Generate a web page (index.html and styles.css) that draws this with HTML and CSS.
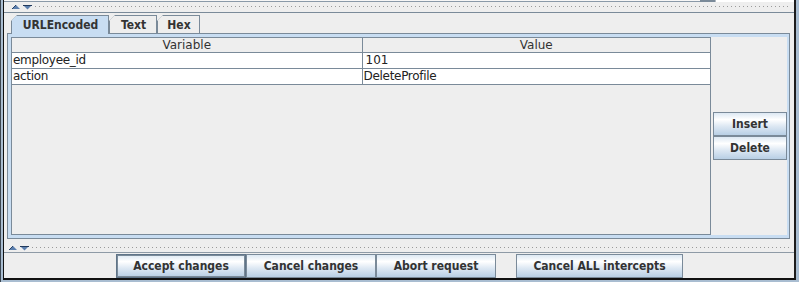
FILE: index.html
```html
<!DOCTYPE html>
<html>
<head>
<meta charset="utf-8">
<link rel="stylesheet" href="styles.css">
</head>
<body>
<div class="window">
  <div class="pane">
    <div class="top-strip">
      <div class="ts-track"></div>
      <div class="ts-thumb"></div>
      <div class="ts-corner"></div>
    </div>
    <div class="divider divider-top">
      <svg class="arrows" width="21" height="5" viewBox="0 0 21 5">
        <polygon points="4,0 8,4 0,4" fill="#5b7fae"/>
        <polyline points="0,4 4,0" stroke="#2a4468" stroke-width="1" fill="none"/>
        <polygon points="11,0 20,0 15.5,4.5" fill="#5b7fae"/>
        <line x1="11" y1="0.5" x2="20" y2="0.5" stroke="#223a5c" stroke-width="1"/>
      </svg>
      <div class="dots"></div>
    </div>
    <div class="tab-section">
      <div class="tabbar">
        <div class="tab tab-url selected"><span class="tab-face">URLEncoded</span></div>
        <div class="tab tab-text"><span class="tab-face">Text</span></div>
        <div class="tab tab-hex"><span class="tab-face">Hex</span></div>
      </div>
      <div class="tab-box">
        <div class="tab-content">
          <div class="scroll">
            <table class="grid">
              <colgroup><col class="col-a"><col class="col-b"></colgroup>
              <thead>
                <tr><th>Variable</th><th>Value</th></tr>
              </thead>
              <tbody>
                <tr><td>employee_id</td><td class="editing">101</td></tr>
                <tr><td>action</td><td>DeleteProfile</td></tr>
              </tbody>
            </table>
          </div>
          <div class="side">
            <button class="btn side-btn">Insert</button>
            <button class="btn side-btn">Delete</button>
          </div>
        </div>
      </div>
    </div>
    <div class="divider divider-bottom">
      <svg class="arrows" width="21" height="5" viewBox="0 0 21 5">
        <polygon points="4,0 8,4 0,4" fill="#5b7fae"/>
        <polyline points="0,4 4,0" stroke="#2a4468" stroke-width="1" fill="none"/>
        <polygon points="11,0 20,0 15.5,4.5" fill="#5b7fae"/>
        <line x1="11" y1="0.5" x2="20" y2="0.5" stroke="#223a5c" stroke-width="1"/>
      </svg>
      <div class="dots"></div>
    </div>
    <div class="button-bar">
      <button class="btn default w-accept">Accept changes</button>
      <button class="btn w-cancel">Cancel changes</button>
      <button class="btn w-abort">Abort request</button>
      <button class="btn w-all">Cancel ALL intercepts</button>
    </div>
  </div>
</div>
</body>
</html>
```
FILE: styles.css
```css
html, body {
  margin: 0;
  padding: 0;
}

body {
  width: 799px;
  height: 282px;
  overflow: hidden;
  background: #a9bdd1;
  font-family: "DejaVu Sans", sans-serif;
  font-size: 12px;
  color: #333333;
}

.window {
  width: 799px;
  height: 282px;
  box-sizing: border-box;
  padding-left: 3px;
  background: #a9bdd1;
  box-shadow: inset 1px 0 0 #3c4650;
}

.pane {
  width: 793px;
  height: 280px;
  box-sizing: border-box;
  border-left: 1px solid #111111;
  border-right: 2px solid #1c1c1c;
  border-bottom: 2px solid #111111;
  background: #eeeeee;
  display: flex;
  flex-direction: column;
}

/* remnant of the component above */
.top-strip {
  display: flex;
  height: 2px;
  flex: none;
}
.ts-track {
  flex: 1;
  background: #f6f6f6;
  border-bottom: 1px solid #8a99a8;
}
.ts-thumb {
  width: 15px;
  background: #7a8a99;
}
.ts-corner {
  width: 79px;
  background: #ffffff;
  box-shadow: inset 1px 0 0 #b0b8c0;
}

/* split pane dividers */
.divider {
  height: 10px;
  flex: none;
  box-sizing: border-box;
  display: flex;
  align-items: flex-start;
}
.divider-top {
  padding: 3px 4px 0 8px;
}
.divider-bottom {
  padding: 4px 4px 0 5px;
}
.arrows {
  display: block;
  flex: none;
}
.dots {
  flex: 1;
  height: 1px;
  margin-top: 1px;
  margin-left: 2px;
  background: repeating-linear-gradient(to right, #9a9a9a 0 1px, transparent 1px 4px);
}

/* tabbed pane */
.tab-section {
  flex: none;
  height: 230px;
  box-sizing: border-box;
  border-top: 1px solid #7a8a99;
  padding: 2px 4px 3px 3px;
  display: flex;
  flex-direction: column;
}

.tabbar {
  display: flex;
  align-items: flex-start;
  height: 18px;
  padding-left: 4px;
  flex: none;
  position: relative;
  z-index: 1;
}

.tab {
  height: 18px;
  box-sizing: border-box;
  padding: 1px 1px 0 1px;
  background: #7a8a99;
  clip-path: polygon(0 6px, 6px 0, 100% 0, 100% 100%, 0 100%);
  flex: none;
}
.tab-face {
  display: flex;
  align-items: center;
  justify-content: center;
  height: 100%;
  padding-left: 1px;
  background: #eeeeee;
  clip-path: polygon(0 2.6px, 2.6px 0, 100% 0, 100% 100%, 0 100%);
  font-family: "DejaVu Sans Condensed", "DejaVu Sans", sans-serif;
  font-stretch: condensed;
  font-weight: bold;
  font-size: 12px;
  color: #333333;
  white-space: nowrap;
}
.tab.selected {
  height: 19px;
}
.tab.selected .tab-face {
  background: #c8ddf2;
}
.tab-url { width: 98px; }
.tab-text { width: 48px; }
.tab-hex { width: 43px; }

.tab-box {
  height: 206px;
  box-sizing: border-box;
  border: 1px solid #7a8a99;
  background: #c8ddf2;
  padding: 3px 2px 3px 3px;
  flex: none;
}

.tab-content {
  display: flex;
  height: 198px;
  background: #eeeeee;
}

.scroll {
  width: 700px;
  height: 198px;
  box-sizing: border-box;
  border: 1px solid #7a8a99;
  background: #eeeeee;
  flex: none;
}

.grid {
  border-collapse: collapse;
  table-layout: fixed;
  width: 698px;
}
.col-a { width: 350px; }
.col-b { width: 348px; }

.grid th {
  height: 14px;
  padding: 0;
  font-weight: normal;
  font-size: 12px;
  line-height: 14px;
  color: #333333;
  background: #eeeeee;
  text-align: center;
  border-right: 1px solid #7a8a99;
  border-bottom: 1px solid #7a8a99;
}
.grid th:last-child {
  border-right: none;
}
.grid td {
  height: 15px;
  padding: 0 0 0 1px;
  font-size: 12px;
  line-height: 15px;
  letter-spacing: -0.3px;
  color: #222222;
  background: #ffffff;
  border-right: 1px solid #7a8a99;
  border-bottom: 1px solid #7a8a99;
  white-space: nowrap;
  overflow: hidden;
}
.grid td:last-child {
  border-right: none;
}
.grid td.editing {
  padding-left: 3px;
  letter-spacing: 0;
}

.side {
  flex: 1;
  display: flex;
  flex-direction: column;
  justify-content: center;
  padding-left: 2px;
}

/* buttons */
.btn {
  height: 24px;
  box-sizing: border-box;
  margin: 0;
  padding: 0;
  border: 1px solid #7a8a99;
  border-radius: 0;
  background: linear-gradient(to bottom, #dde8f3 0%, #ffffff 30%, #dde8f3 60%, #b8cfe5 100%);
  font-family: "DejaVu Sans Condensed", "DejaVu Sans", sans-serif;
  font-stretch: condensed;
  font-weight: bold;
  font-size: 12px;
  color: #333333;
  white-space: nowrap;
  flex: none;
}
.side-btn {
  width: 74px;
}
.btn.default {
  border-color: #5f7488;
  box-shadow: inset 0 0 0 1px #7a8a99;
}

.button-bar {
  flex: none;
  height: 26px;
  box-sizing: border-box;
  border-top: 1px solid #8e9aa6;
  padding-top: 1px;
  display: flex;
  justify-content: center;
  padding-left: 1px;
}
.w-accept { width: 130px; }
.w-cancel { width: 130px; }
.w-abort { width: 120px; margin-right: 20px; }
.w-all { width: 167px; }
```
